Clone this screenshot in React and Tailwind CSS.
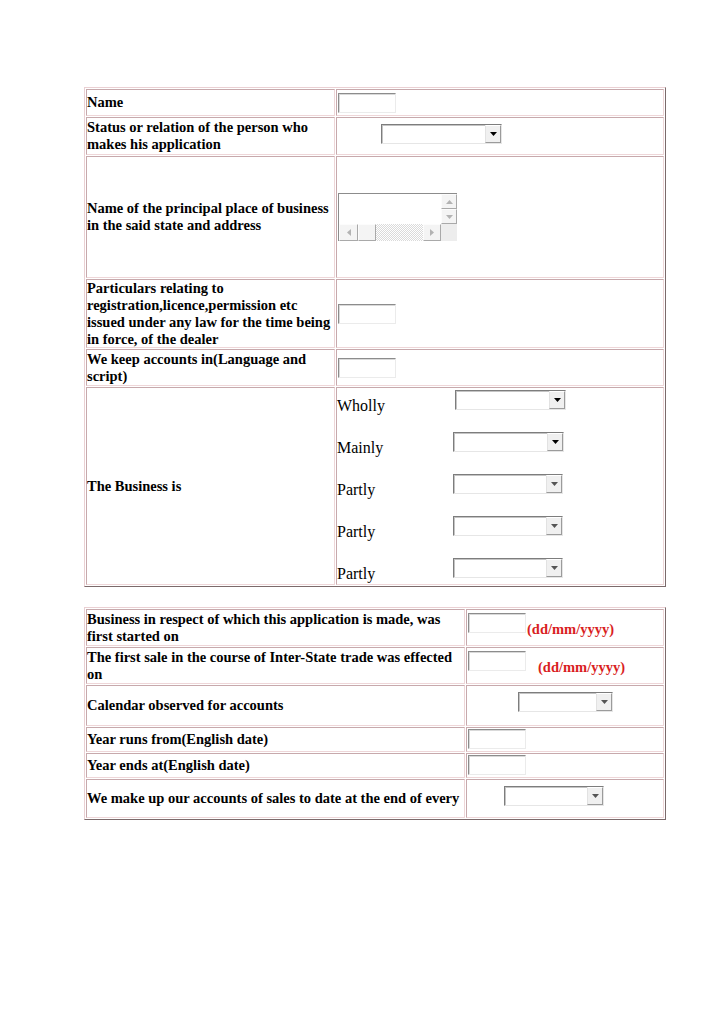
import React from 'react';

// old-style form with bordered tables

const Arrow = ({ dir = 'down', color = '#000', w = 7, h = 4 }) => {
  const paths = {
    down: `M0 0H${w}L${w / 2} ${h}Z`,
    up: `M0 ${h}H${w}L${w / 2} 0Z`,
    left: `M${h} 0V${w}L0 ${w / 2}Z`,
    right: `M0 0V${w}L${h} ${w / 2}Z`,
  };
  const vert = dir === 'down' || dir === 'up';
  return (
    <svg width={vert ? w : h} height={vert ? h : w} viewBox={`0 0 ${vert ? w : h} ${vert ? h : w}`}>
      <path d={paths[dir]} fill={color} />
    </svg>
  );
};

const TextBox = () => (
  <div className="w-[58px] h-[20px] shrink-0 bg-white border border-t-[#8c8c8c] border-l-[#8c8c8c] border-b-[#ebebeb] border-r-[#ebebeb] shadow-[inset_1px_1px_0_#d9d9d9]" />
);

const Select = ({ className = '', dim = false }) => (
  <div className={`h-[20px] shrink-0 flex bg-white border border-t-[#7d7d7d] border-l-[#7d7d7d] border-b-[#e6e6e6] border-r-[#e6e6e6] shadow-[inset_1px_1px_0_#c4c4c4] ${className}`}>
    <div className="flex-1" />
    <div className="w-[16px] h-full flex items-center justify-center bg-[#f0f0f0] border border-t-white border-l-[#e2e2e2] border-b-[#9b9b9b] border-r-[#9b9b9b]">
      <Arrow color={dim ? '#555' : '#000'} />
    </div>
  </div>
);

const ScrollBtn = ({ className = '', dir }) => (
  <div className={`flex items-center justify-center bg-[#f4f4f4] border border-t-[#fcfcfc] border-l-[#fcfcfc] border-b-[#a9a9a9] border-r-[#a9a9a9] ${className}`}>
    <Arrow dir={dir} color="#b3b3b3" w={7} h={4} />
  </div>
);

const TextArea = () => (
  <div className="w-[119px] h-[48px] grid grid-cols-[1fr_16px] grid-rows-[1fr_17px] bg-white border-t border-l border-t-[#8c8c8c] border-l-[#8c8c8c]">
    <div />
    <div className="flex flex-col">
      <ScrollBtn className="flex-1" dir="up" />
      <ScrollBtn className="flex-1" dir="down" />
    </div>
    <div className="flex">
      <ScrollBtn className="w-[19px]" dir="left" />
      <div className="w-[18px] bg-[#f4f4f4] border border-t-[#fcfcfc] border-l-[#fcfcfc] border-b-[#a9a9a9] border-r-[#a9a9a9]" />
      <div className="flex-1 bg-[#efefef] bg-[image:repeating-conic-gradient(#dadada_0%_25%,#ffffff_0%_50%)] bg-[length:2px_2px]" />
      <ScrollBtn className="w-[18px]" dir="right" />
    </div>
    <div className="bg-[#ededed]" />
  </div>
);

const Cell = ({ className = '', children }) => (
  <div className={`border border-t-[#c7a9ac] border-l-[#c7a9ac] border-b-[#eed6d8] border-r-[#eed6d8] ${className}`}>
    {children}
  </div>
);

const Label = ({ className = '', children }) => (
  <Cell className={`flex items-center text-[14.5px] leading-[17px] font-bold text-black ${className}`}>
    <div>{children}</div>
  </Cell>
);

const Table = ({ className = '', children }) => (
  <div className={`ml-[84px] w-[582px] p-px flex flex-col gap-px border border-t-[#ead0d3] border-l-[#ead0d3] border-b-[#7b6a6b] border-r-[#7b6a6b] ${className}`}>
    {children}
  </div>
);

const DateHint = ({ className = '' }) => (
  <span className={`text-[14.5px] leading-[14px] font-bold text-[#d91e22] mb-[-3px] ${className}`}>(dd/mm/yyyy)</span>
);

const businessRows = [
  { label: 'Wholly', labelW: 'w-[118px]', sel: 'w-[111px]', dim: false },
  { label: 'Mainly', labelW: 'w-[116px]', sel: 'w-[111px]', dim: false },
  { label: 'Partly', labelW: 'w-[116px]', sel: 'w-[110px]', dim: true },
  { label: 'Partly', labelW: 'w-[116px]', sel: 'w-[110px]', dim: true },
  { label: 'Partly', labelW: 'w-[116px]', sel: 'w-[110px]', dim: true },
];

export default function App() {
  return (
    <div className="min-h-[1017px] w-[719px] bg-white pt-[87px] font-['Liberation_Serif','Times_New_Roman',serif] text-black">
      <Table>
        <div className="grid grid-cols-[249px_1fr] gap-px">
          <Label className="h-[27px]">Name</Label>
          <Cell className="h-[27px] flex items-center pl-px">
            <TextBox />
          </Cell>
        </div>
        <div className="grid grid-cols-[249px_1fr] gap-px">
          <Label className="h-[38px]">Status or relation of the person who makes his application</Label>
          <Cell className="h-[38px] flex items-center pb-[4px]">
            <Select className="w-[121px] ml-[44px]" />
          </Cell>
        </div>
        <div className="grid grid-cols-[249px_1fr] gap-px">
          <Label className="h-[122px]">Name of the principal place of business in the said state and address</Label>
          <Cell className="h-[122px] flex items-center pl-px">
            <TextArea />
          </Cell>
        </div>
        <div className="grid grid-cols-[249px_1fr] gap-px">
          <Label className="h-[69px]">
            Particulars relating to registration,licence,permission etc issued under any law for the time being in force, of the dealer
          </Label>
          <Cell className="h-[69px] flex items-center pl-px">
            <TextBox />
          </Cell>
        </div>
        <div className="grid grid-cols-[249px_1fr] gap-px">
          <Label className="h-[37px]">We keep accounts in(Language and script)</Label>
          <Cell className="h-[37px] flex items-center pl-px">
            <TextBox />
          </Cell>
        </div>
        <div className="grid grid-cols-[249px_1fr] gap-px">
          <Label className="h-[198px]">The Business is</Label>
          <Cell className="h-[198px] flex flex-col gap-[22px] pt-[2px]">
            {businessRows.map((r, i) => (
              <div key={i} className="h-[20px] flex items-start">
                <span className={`${r.labelW} mt-[8px] text-[16px] leading-4`}>{r.label}</span>
                <Select className={r.sel} dim={r.dim} />
              </div>
            ))}
          </Cell>
        </div>
      </Table>

      <Table className="mt-[20px]">
        <div className="grid grid-cols-[379px_1fr] gap-px">
          <Label className="h-[37px]">Business in respect of which this application is made, was first started on</Label>
          <Cell className="h-[37px] flex items-start pt-[3px] pl-px">
            <div className="flex items-end">
              <TextBox />
              <DateHint className="ml-px" />
            </div>
          </Cell>
        </div>
        <div className="grid grid-cols-[379px_1fr] gap-px">
          <Label className="h-[37px]">The first sale in the course of Inter-State trade was effected on</Label>
          <Cell className="h-[37px] flex items-start pt-[3px] pl-px">
            <div className="flex items-end">
              <TextBox />
              <DateHint className="ml-[12px]" />
            </div>
          </Cell>
        </div>
        <div className="grid grid-cols-[379px_1fr] gap-px">
          <Label className="h-[41px]">Calendar observed for accounts</Label>
          <Cell className="h-[41px] flex items-start pt-[6px]">
            <Select className="w-[95px] ml-[51px]" dim />
          </Cell>
        </div>
        <div className="grid grid-cols-[379px_1fr] gap-px">
          <Label className="h-[25px]">Year runs from(English date)</Label>
          <Cell className="h-[25px] flex items-start pt-px pl-px">
            <TextBox />
          </Cell>
        </div>
        <div className="grid grid-cols-[379px_1fr] gap-px">
          <Label className="h-[25px]">Year ends at(English date)</Label>
          <Cell className="h-[25px] flex items-start pt-px pl-px">
            <TextBox />
          </Cell>
        </div>
        <div className="grid grid-cols-[379px_1fr] gap-px">
          <Label className="h-[39px]">We make up our accounts of sales to date at the end of every</Label>
          <Cell className="h-[39px] flex items-start pt-[6px]">
            <Select className="w-[100px] ml-[37px]" dim />
          </Cell>
        </div>
      </Table>
    </div>
  );
}
